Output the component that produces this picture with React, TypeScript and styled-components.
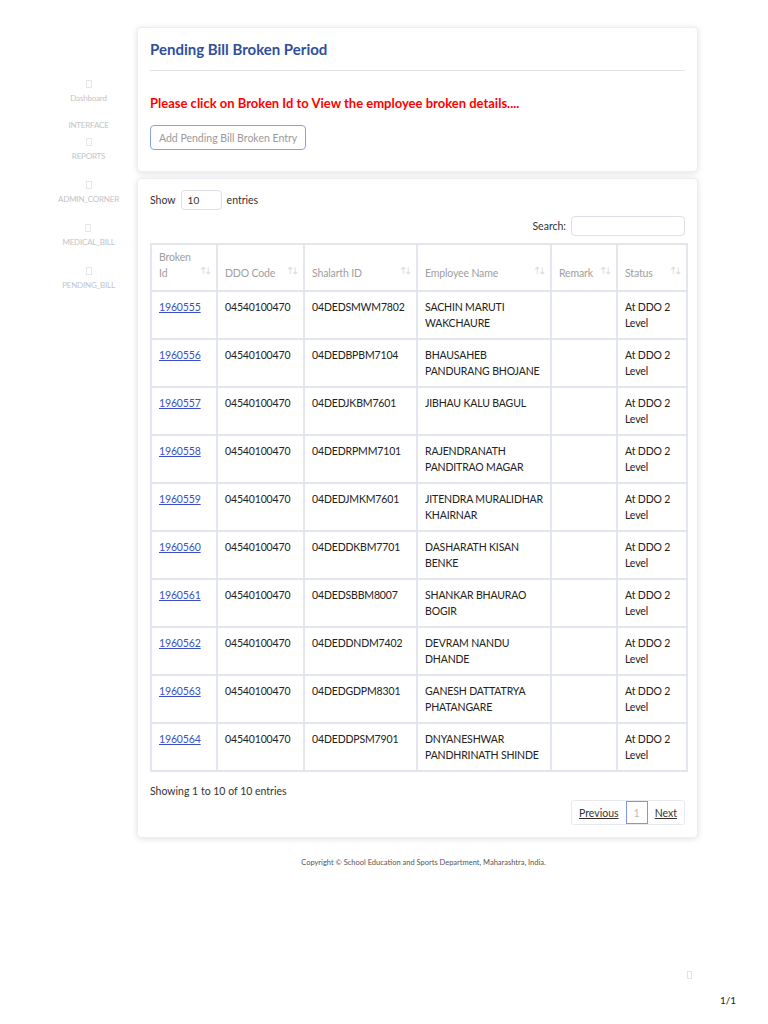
import React from "react";
import styled, { createGlobalStyle } from "styled-components";

const G = createGlobalStyle`
  body { margin: 0; background: #fff; font-family: Lato, "Noto Sans", sans-serif; }
`;
const Page = styled.div`position: relative; width: 768px; height: 1024px; display: flex;`;
const Side = styled.div`width: 137px; display: flex; flex-direction: column; align-items: center; padding-top: 80px; padding-left: 40px; box-sizing: border-box;`;
const NavItem = styled.div<{ mt: number }>`margin-top: ${p => p.mt}px; display: flex; flex-direction: column; align-items: center; font-size: 8px; color: #c4c4c4; letter-spacing: -0.2px;`;
const NavIcon = styled.div`width: 4px; height: 6px; border: 1px solid #e6e6e6; margin-bottom: 5px;`;
const Main = styled.div`width: 561px; padding-top: 27px; display: flex; flex-direction: column;`;
const Card = styled.div`background: #fff; border-radius: 4px; box-shadow: 0 1px 6px rgba(0,0,0,0.12); border: 1px solid #eceef3;`;
const TopCard = styled(Card)`height: 145px; padding: 0 12px; box-sizing: border-box;`;
const Title = styled.h1`margin: 0; height: 42px; display: flex; align-items: center; font-size: 15px; font-weight: 700; color: #2f4f9c; border-bottom: 1px solid #e3e3e3;`;
const Alert = styled.div`margin-top: 24px; color: #ff0000; font-weight: 700; font-size: 13px;`;
const AddBtn = styled.button`margin-top: 14px; height: 25px; padding: 0 8px; border: 1px solid #8c9ee8; border-radius: 4px; background: #fff; color: #9a9a9a; font-family: inherit; font-size: 10.5px;`;
const TableCard = styled(Card)`margin-top: 6px; padding: 11px 12px 12px 12px;`;
const Row = styled.div<{ end?: boolean }>`display: flex; align-items: center; gap: 5px; font-size: 10.5px; color: #333; justify-content: ${p => p.end ? "flex-end" : "flex-start"};`;
const Input = styled.div<{ w: number }>`width: ${p => p.w}px; height: 20px; border: 1px solid #dde0e8; border-radius: 4px; box-sizing: border-box; padding-left: 6px; display: flex; align-items: center; font-size: 10px;`;
const Table = styled.table`margin-top: 7px; width: 536px; table-layout: fixed; border-collapse: collapse; font-size: 10.5px; letter-spacing: -0.15px; color: #222;`;
const Th = styled.th<{ w: number }>`width: ${p => p.w}px; height: 47px; border: 2px solid #e3e5ef; color: #a0a0a0; font-weight: 400; text-align: left; vertical-align: bottom; padding: 0 6px 9px 7px; position: relative; line-height: 16px; box-sizing: border-box;`;
const Sort = styled.span`position: absolute; right: 6px; bottom: 12px; font-size: 8px; color: #d0d0d0; letter-spacing: -1px;`;
const Td = styled.td`height: 48px; border: 2px solid #e3e5ef; vertical-align: top; padding: 7px 4px 0 7px; line-height: 16px; box-sizing: border-box;`;
const IdLink = styled.a`color: #3c4fc4; text-decoration: underline;`;
const Info = styled.div`margin-top: 13px; font-size: 10.5px; color: #333;`;
const Pager = styled.div`margin-top: 3px; display: flex; justify-content: flex-end;`;
const PagerBox = styled.div`display: flex; border: 1px solid #e8eaf0; border-radius: 3px; height: 23px; align-items: stretch; font-size: 10.5px;`;
const PageBtn = styled.span<{ active?: boolean }>`display: flex; align-items: center; padding: 0 7px; text-decoration: ${p => p.active ? "none" : "underline"}; color: ${p => p.active ? "#bbb" : "#333"}; border: ${p => p.active ? "1px solid #7f95e6" : "none"};`;
const Footer = styled.div`margin-top: 20px; text-align: center; font-size: 7.5px; color: #555; padding-left: 12px;`;
const Corner = styled.div`position: absolute; right: 32px; bottom: 18px; font-size: 10px; color: #222;`;
const Tiny = styled.div`position: absolute; left: 687px; top: 971px; width: 3px; height: 6px; border: 1px solid #e2e2e2;`;

const rows = [
  ["1960555", "04DEDSMWM7802", "SACHIN MARUTI WAKCHAURE"],
  ["1960556", "04DEDBPBM7104", "BHAUSAHEB PANDURANG BHOJANE"],
  ["1960557", "04DEDJKBM7601", "JIBHAU KALU BAGUL"],
  ["1960558", "04DEDRPMM7101", "RAJENDRANATH PANDITRAO MAGAR"],
  ["1960559", "04DEDJMKM7601", "JITENDRA MURALIDHAR KHAIRNAR"],
  ["1960560", "04DEDDKBM7701", "DASHARATH KISAN BENKE"],
  ["1960561", "04DEDSBBM8007", "SHANKAR BHAURAO BOGIR"],
  ["1960562", "04DEDDNDM7402", "DEVRAM NANDU DHANDE"],
  ["1960563", "04DEDGDPM8301", "GANESH DATTATRYA PHATANGARE"],
  ["1960564", "04DEDDPSM7901", "DNYANESHWAR PANDHRINATH SHINDE"],
];
const heads: [string, number][] = [["Broken Id", 66], ["DDO Code", 87], ["Shalarth ID", 113], ["Employee Name", 134], ["Remark", 66], ["Status", 70]];
const nav: [string, number, boolean][] = [["Dashboard", 0, true], ["INTERFACE", 17, false], ["REPORTS", 8, true], ["ADMIN_CORNER", 20, true], ["MEDICAL_BILL", 20, true], ["PENDING_BILL", 20, true]];

export default function App() {
  return (
    <Page>
      <G />
      <Side>
        {nav.map(([n, mt, ic]) => (
          <NavItem key={n} mt={mt}>{ic && <NavIcon />}{n}</NavItem>
        ))}
      </Side>
      <Main>
        <TopCard>
          <Title>Pending Bill Broken Period</Title>
          <Alert>Please click on Broken Id to View the employee broken details....</Alert>
          <AddBtn>Add Pending Bill Broken Entry</AddBtn>
        </TopCard>
        <TableCard>
          <Row>Show <Input w={41}>10</Input> entries</Row>
          <Row end style={{ marginTop: 6 }}>Search: <Input w={114} /></Row>
          <Table>
            <thead>
              <tr>{heads.map(([h, w], i) => (
                <Th key={h} w={w} style={i === 0 ? { paddingRight: 20 } : undefined}>{h}<Sort>↑↓</Sort></Th>
              ))}</tr>
            </thead>
            <tbody>
              {rows.map(r => (
                <tr key={r[0]}>
                  <Td><IdLink>{r[0]}</IdLink></Td>
                  <Td>04540100470</Td>
                  <Td>{r[1]}</Td>
                  <Td>{r[2]}</Td>
                  <Td></Td>
                  <Td>At DDO 2 Level</Td>
                </tr>
              ))}
            </tbody>
          </Table>
          <Info>Showing 1 to 10 of 10 entries</Info>
          <Pager><PagerBox><PageBtn>Previous</PageBtn><PageBtn active>1</PageBtn><PageBtn>Next</PageBtn></PagerBox></Pager>
        </TableCard>
        <Footer>Copyright © School Education and Sports Department, Maharashtra, India.</Footer>
      </Main>
      <Tiny />
      <Corner>1/1</Corner>
    </Page>
  );
}
